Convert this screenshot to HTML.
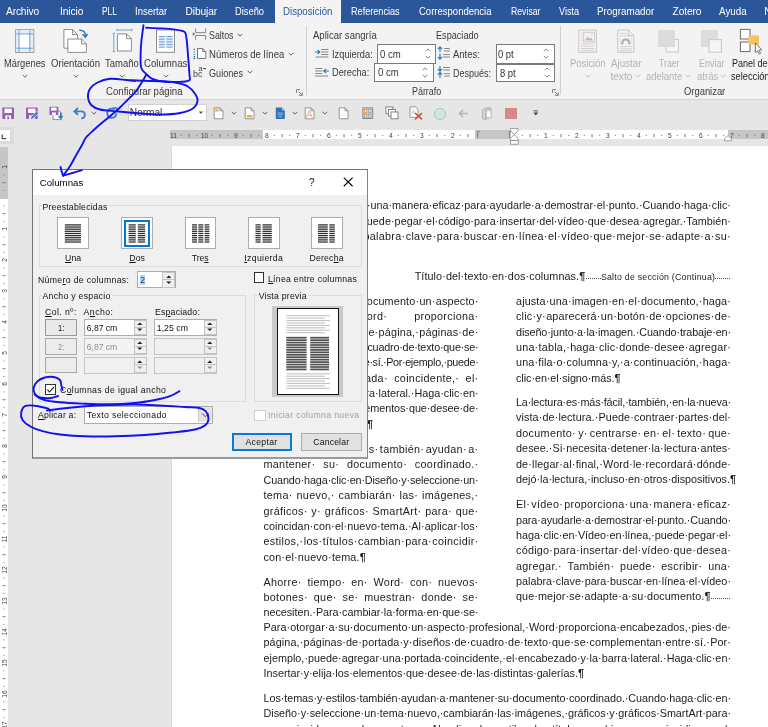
<!DOCTYPE html>
<html lang="es"><head><meta charset="utf-8"><title>Columnas</title>
<style>
html,body{margin:0;padding:0;background:#e6e6e6}
body{width:768px;height:727px;overflow:hidden;position:relative;font-family:"Liberation Sans",sans-serif}
#app{position:absolute;left:0;top:0;width:768px;height:727px;overflow:hidden;background:#e6e6e6}
.sec{position:absolute;left:0;top:0;width:768px;height:727px;will-change:transform}
.b{position:absolute;box-sizing:content-box}
svg.b{overflow:visible}
.t{position:absolute;white-space:nowrap;transform-origin:0 50%}
.t u{text-decoration:underline;text-underline-offset:1px;text-decoration-thickness:0.8px}
.ln{position:absolute;white-space:nowrap;font-size:10.8px;line-height:14px;color:#1c1c1c;word-spacing:-0.278em;letter-spacing:0.3px}
.ln.j{text-align:justify;text-align-last:justify}
</style></head>
<body><div id="app">
<div class="sec" id="page">
<div class="b" style="left:171.00px;top:146.00px;width:597.00px;height:581.00px;background:#fff;border-left:1px solid #d9d9d9"></div>
<div class="ln j" style="left:263.50px;top:199.00px;line-height:12px;width:101.70px;letter-spacing:0.053px;">El· vídeo· proporciona</div>
<div class="ln j" style="left:366.80px;top:199.00px;line-height:12px;width:364.20px;letter-spacing:0.010px;">· una· manera· eficaz· para· ayudarle· a· demostrar· el· punto.· Cuando· haga· clic·</div>
<div class="ln j" style="left:263.50px;top:215.00px;line-height:12px;width:95.64px;letter-spacing:0.105px;">en· Vídeo· en· línea,·</div>
<div class="ln j" style="left:360.74px;top:215.00px;line-height:12px;width:370.26px;letter-spacing:0.034px;">puede· pegar· el· código· para· insertar· del· vídeo· que· desea· agregar.· También·</div>
<div class="ln j" style="left:263.50px;top:230.00px;line-height:12px;width:98.29px;letter-spacing:0.208px;">puede· escribir· una·</div>
<div class="ln j" style="left:363.39px;top:230.00px;line-height:12px;width:367.61px;">palabra· clave· para· buscar· en· línea· el· vídeo· que· mejor· se· adapte· a· su·</div>
<div class="ln n" style="left:263.50px;top:245.00px;line-height:12px;letter-spacing:-0.312px;">documento.<b>¶</b></div>
<div class="ln n" style="left:414.70px;top:270.00px;line-height:12px;letter-spacing:0.081px;">Título· del· texto· en· dos· columnas.<b>¶</b></div>
<div class="b" style="left:585.6px;top:277.6px;width:15px;border-top:1px dotted #555"></div>
<span class="t" style="left:600.90px;top:272.00px;font-size:8.8px;line-height:10px;color:#222;letter-spacing:0.230px;">Salto de sección (Continua)</span>
<div class="b" style="left:715.4px;top:277.6px;width:15px;border-top:1px dotted #555"></div>
<div class="ln j" style="left:263.50px;top:295.00px;line-height:12px;width:95.49px;">Para· otorgar· a· su·</div>
<div class="ln j" style="left:360.59px;top:295.00px;line-height:12px;width:117.91px;letter-spacing:0.155px;">documento· un· aspecto·</div>
<div class="ln j" style="left:263.50px;top:310.00px;line-height:12px;width:91.31px;">profesional,·</div>
<div class="ln j" style="left:356.41px;top:310.00px;line-height:12px;width:122.09px;">Word· proporciona·</div>
<div class="ln j" style="left:263.50px;top:326.00px;line-height:12px;width:97.14px;letter-spacing:0.137px;">encabezados,· pies·</div>
<div class="ln j" style="left:362.24px;top:326.00px;line-height:12px;width:116.26px;letter-spacing:0.173px;">de· página,· páginas· de·</div>
<div class="ln j" style="left:263.50px;top:341.00px;line-height:12px;width:102.30px;letter-spacing:-0.151px;">portada· y· diseños· de·</div>
<div class="ln j" style="left:367.40px;top:341.00px;line-height:12px;width:111.10px;letter-spacing:-0.186px;">cuadro· de· texto· que· se·</div>
<div class="ln j" style="left:263.50px;top:356.00px;line-height:12px;width:81.29px;">complementan·</div>
<div class="ln j" style="left:346.39px;top:356.00px;line-height:12px;width:132.11px;letter-spacing:-0.297px;">entre· sí.· Por· ejemplo,· puede·</div>
<div class="ln j" style="left:263.50px;top:372.00px;line-height:12px;width:80.09px;">agregar· una·</div>
<div class="ln j" style="left:345.19px;top:372.00px;line-height:12px;width:133.31px;">portada· coincidente,· el·</div>
<div class="ln j" style="left:263.50px;top:387.00px;line-height:12px;width:84.79px;letter-spacing:0.059px;">encabezado· y· la·</div>
<div class="ln j" style="left:349.89px;top:387.00px;line-height:12px;width:128.61px;letter-spacing:-0.021px;">barra· lateral.· Haga· clic· en·</div>
<div class="ln j" style="left:263.50px;top:402.00px;line-height:12px;width:90.99px;letter-spacing:0.054px;">Insertar· y· elija· los·</div>
<div class="ln j" style="left:356.09px;top:402.00px;line-height:12px;width:122.41px;letter-spacing:-0.059px;">elementos· que· desee· de·</div>
<div class="ln n" style="left:263.50px;top:418.00px;line-height:12px;letter-spacing:0.039px;">las· distintas· galerías.</div>
<div class="ln n" style="left:366.90px;top:418.00px;line-height:12px;letter-spacing:-1.413px;"><b>¶</b></div>
<div class="ln j" style="left:263.50px;top:443.00px;line-height:12px;width:76.69px;">Los· temas· y·</div>
<div class="ln j" style="left:341.79px;top:443.00px;line-height:12px;width:136.71px;">estilos· también· ayudan· a·</div>
<div class="ln j" style="left:263.50px;top:458.00px;line-height:12px;width:215.00px;">mantener· su· documento· coordinado.·</div>
<div class="ln j" style="left:263.50px;top:474.00px;line-height:12px;width:215.00px;letter-spacing:-0.111px;">Cuando· haga· clic· en· Diseño· y· seleccione· un·</div>
<div class="ln j" style="left:263.50px;top:489.00px;line-height:12px;width:215.00px;">tema· nuevo,· cambiarán· las· imágenes,·</div>
<div class="ln j" style="left:263.50px;top:505.00px;line-height:12px;width:215.00px;">gráficos· y· gráficos· SmartArt· para· que·</div>
<div class="ln j" style="left:263.50px;top:520.00px;line-height:12px;width:215.00px;letter-spacing:0.068px;">coincidan· con· el· nuevo· tema.· Al· aplicar· los·</div>
<div class="ln j" style="left:263.50px;top:535.00px;line-height:12px;width:215.00px;">estilos,· los· títulos· cambian· para· coincidir·</div>
<div class="ln n" style="left:263.50px;top:551.00px;line-height:12px;letter-spacing:0.149px;">con· el· nuevo· tema.<b>¶</b></div>
<div class="ln j" style="left:263.50px;top:576.00px;line-height:12px;width:215.00px;">Ahorre· tiempo· en· Word· con· nuevos·</div>
<div class="ln j" style="left:263.50px;top:591.00px;line-height:12px;width:215.00px;">botones· que· se· muestran· donde· se·</div>
<div class="ln j" style="left:263.50px;top:606.00px;line-height:12px;width:215.00px;letter-spacing:-0.038px;">necesiten.· Para· cambiar· la· forma· en· que· se·</div>
<div class="ln j" style="left:516.00px;top:295.00px;line-height:12px;width:215.00px;letter-spacing:0.140px;">ajusta· una· imagen· en· el· documento,· haga·</div>
<div class="ln j" style="left:516.00px;top:310.00px;line-height:12px;width:215.00px;letter-spacing:0.210px;">clic· y· aparecerá· un· botón· de· opciones· de·</div>
<div class="ln j" style="left:516.00px;top:326.00px;line-height:12px;width:215.00px;letter-spacing:-0.097px;">diseño· junto· a· la· imagen.· Cuando· trabaje· en·</div>
<div class="ln j" style="left:516.00px;top:341.00px;line-height:12px;width:215.00px;letter-spacing:0.188px;">una· tabla,· haga· clic· donde· desee· agregar·</div>
<div class="ln j" style="left:516.00px;top:356.00px;line-height:12px;width:215.00px;letter-spacing:0.121px;">una· fila· o· columna· y,· a· continuación,· haga·</div>
<div class="ln n" style="left:516.00px;top:372.00px;line-height:12px;letter-spacing:-0.043px;">clic· en· el· signo· más.<b>¶</b></div>
<div class="ln j" style="left:516.00px;top:396.00px;line-height:12px;width:215.00px;letter-spacing:-0.135px;">La· lectura· es· más· fácil,· también,· en· la· nueva·</div>
<div class="ln j" style="left:516.00px;top:411.00px;line-height:12px;width:215.00px;letter-spacing:0.094px;">vista· de· lectura.· Puede· contraer· partes· del·</div>
<div class="ln j" style="left:516.00px;top:427.00px;line-height:12px;width:215.00px;">documento· y· centrarse· en· el· texto· que·</div>
<div class="ln j" style="left:516.00px;top:442.00px;line-height:12px;width:215.00px;letter-spacing:0.069px;">desee.· Si· necesita· detener· la· lectura· antes·</div>
<div class="ln j" style="left:516.00px;top:458.00px;line-height:12px;width:215.00px;letter-spacing:0.119px;">de· llegar· al· final,· Word· le· recordará· dónde·</div>
<div class="ln n" style="left:516.00px;top:473.00px;line-height:12px;letter-spacing:-0.004px;">dejó· la· lectura,· incluso· en· otros· dispositivos.<b>¶</b></div>
<div class="ln j" style="left:516.00px;top:498.00px;line-height:12px;width:215.00px;">El· vídeo· proporciona· una· manera· eficaz·</div>
<div class="ln j" style="left:516.00px;top:514.00px;line-height:12px;width:215.00px;letter-spacing:-0.088px;">para· ayudarle· a· demostrar· el· punto.· Cuando·</div>
<div class="ln j" style="left:516.00px;top:529.00px;line-height:12px;width:215.00px;letter-spacing:-0.038px;">haga· clic· en· Vídeo· en· línea,· puede· pegar· el·</div>
<div class="ln j" style="left:516.00px;top:544.00px;line-height:12px;width:215.00px;letter-spacing:0.252px;">código· para· insertar· del· vídeo· que· desea·</div>
<div class="ln j" style="left:516.00px;top:560.00px;line-height:12px;width:215.00px;">agregar.· También· puede· escribir· una·</div>
<div class="ln j" style="left:516.00px;top:575.00px;line-height:12px;width:215.00px;letter-spacing:0.009px;">palabra· clave· para· buscar· en· línea· el· vídeo·</div>
<div class="ln n" style="left:516.00px;top:590.00px;line-height:12px;letter-spacing:0.087px;">que· mejor· se· adapte· a· su· documento.<b>¶</b></div>
<div class="b" style="left:711px;top:597.9px;width:19px;border-top:1px dotted #555"></div>
<div class="ln j" style="left:263.50px;top:621.00px;line-height:12px;width:467.50px;letter-spacing:0.052px;">Para· otorgar· a· su· documento· un· aspecto· profesional,· Word· proporciona· encabezados,· pies· de·</div>
<div class="ln j" style="left:263.50px;top:636.00px;line-height:12px;width:467.50px;letter-spacing:0.112px;">página,· páginas· de· portada· y· diseños· de· cuadro· de· texto· que· se· complementan· entre· sí.· Por·</div>
<div class="ln j" style="left:263.50px;top:652.00px;line-height:12px;width:467.50px;letter-spacing:0.009px;">ejemplo,· puede· agregar· una· portada· coincidente,· el· encabezado· y· la· barra· lateral.· Haga· clic· en·</div>
<div class="ln n" style="left:263.50px;top:667.00px;line-height:12px;letter-spacing:-0.007px;">Insertar· y· elija· los· elementos· que· desee· de· las· distintas· galerías.<b>¶</b></div>
<div class="ln j" style="left:263.50px;top:692.00px;line-height:12px;width:467.50px;letter-spacing:-0.054px;">Los· temas· y· estilos· también· ayudan· a· mantener· su· documento· coordinado.· Cuando· haga· clic· en·</div>
<div class="ln j" style="left:263.50px;top:707.00px;line-height:12px;width:467.50px;letter-spacing:-0.008px;">Diseño· y· seleccione· un· tema· nuevo,· cambiarán· las· imágenes,· gráficos· y· gráficos· SmartArt· para·</div>
<div class="ln j" style="left:263.50px;top:723.00px;line-height:12px;width:467.50px;letter-spacing:0.014px;">que· coincidan· con· el· nuevo· tema.· Al· aplicar· los· estilos,· los· títulos· cambian· para· coincidir· con· el·</div>
</div>
<div class="sec" id="tabs">
<div class="b" style="left:0.00px;top:0.00px;width:768.00px;height:23.00px;background:#2b579a"></div>
<div class="b" style="left:274.50px;top:0.00px;width:66.50px;height:23.00px;background:#f3f3f3"></div>
<span class="t" style="left:6.00px;top:6.00px;font-size:10.2px;line-height:11px;color:#fff;letter-spacing:-0.141px;">Archivo</span>
<span class="t" style="left:60.00px;top:6.00px;font-size:10.2px;line-height:11px;color:#fff;letter-spacing:-0.083px;">Inicio</span>
<span class="t" style="left:102.00px;top:6.00px;font-size:10.2px;line-height:11px;color:#fff;transform:scaleX(0.8269);">PLL</span>
<span class="t" style="left:135.30px;top:6.00px;font-size:10.2px;line-height:11px;color:#fff;transform:scaleX(0.9321);">Insertar</span>
<span class="t" style="left:185.50px;top:6.00px;font-size:10.2px;line-height:11px;color:#fff;letter-spacing:-0.112px;">Dibujar</span>
<span class="t" style="left:235.00px;top:6.00px;font-size:10.2px;line-height:11px;color:#fff;transform:scaleX(0.9143);">Diseño</span>
<span class="t" style="left:351.00px;top:6.00px;font-size:10.2px;line-height:11px;color:#fff;transform:scaleX(0.8938);">Referencias</span>
<span class="t" style="left:418.80px;top:6.00px;font-size:10.2px;line-height:11px;color:#fff;transform:scaleX(0.9344);">Correspondencia</span>
<span class="t" style="left:510.50px;top:6.00px;font-size:10.2px;line-height:11px;color:#fff;transform:scaleX(0.8539);">Revisar</span>
<span class="t" style="left:558.60px;top:6.00px;font-size:10.2px;line-height:11px;color:#fff;transform:scaleX(0.8946);">Vista</span>
<span class="t" style="left:597.30px;top:6.00px;font-size:10.2px;line-height:11px;color:#fff;transform:scaleX(0.9635);">Programador</span>
<span class="t" style="left:672.60px;top:6.00px;font-size:10.2px;line-height:11px;color:#fff;letter-spacing:-0.126px;">Zotero</span>
<span class="t" style="left:719.30px;top:6.00px;font-size:10.2px;line-height:11px;color:#fff;transform:scaleX(0.9651);">Ayuda</span>
<span class="t" style="left:282.50px;top:6.00px;font-size:10.2px;line-height:11px;color:#2b579a;transform:scaleX(0.9502);">Disposición</span>
<span class="t" style="left:764.30px;top:6.00px;font-size:10.2px;line-height:11px;color:#fff;">N</span>
</div>
<div class="sec" id="ribbon">
<div class="b" style="left:0.00px;top:23.00px;width:768.00px;height:75.60px;background:#f3f3f3;border-bottom:1px solid #d4d4d4"></div>
<svg class="b" style="left:14.00px;top:28.00px" width="22" height="26" viewBox="0 0 22 26"><rect x="1.75" y="1.75" width="18" height="22.6" fill="#fff" stroke="#8c8c8c" stroke-width="1"/>
<rect x="2.3" y="2.3" width="16.9" height="3.3" fill="#e6eff8"/><rect x="2.3" y="20.4" width="16.9" height="3.4" fill="#e6eff8"/>
<rect x="2.3" y="2.3" width="2.5" height="21.5" fill="#e6eff8"/><rect x="16" y="2.3" width="3.2" height="21.5" fill="#e6eff8"/>
<path d="M5 2.3V23.8M15.8 2.3V23.8M2.3 5.9H19.2M2.3 20.2H19.2" stroke="#5b9bd5" stroke-width="0.9" fill="none"/></svg>
<span class="t" style="left:3.75px;top:58.00px;font-size:10.2px;line-height:11px;color:#3a3a3a;transform:scaleX(0.9159);">Márgenes</span>
<svg class="b" style="left:20.50px;top:73.00px" width="8" height="6" viewBox="0 0 8 6"><path d="M1.70 1.80 L4 4.20 L6.30 1.80" fill="none" stroke="#666" stroke-width="1"/></svg>
<svg class="b" style="left:62.00px;top:27.00px" width="27" height="27" viewBox="0 0 27 27"><path d="M1.9 2.5H10.5L15.5 7.5V21.2H1.9Z" fill="#fff" stroke="#8c8c8c"/>
<path d="M10.5 2.5V7.5H15.5" fill="none" stroke="#8c8c8c"/>
<path d="M5.8 12H19.5L24.4 16.8V25.4H5.8Z" fill="#fff" stroke="#8c8c8c"/>
<path d="M19.5 12V16.8H24.4" fill="none" stroke="#8c8c8c"/>
<path d="M17.3 3.2C21.5 3 23.6 5 23.4 9.3" fill="none" stroke="#2e75b6" stroke-width="1.5"/>
<path d="M20.6 7.2L23.4 10L25.6 6.9" fill="none" stroke="#2e75b6" stroke-width="1.5"/></svg>
<span class="t" style="left:51.00px;top:58.00px;font-size:10.2px;line-height:11px;color:#3a3a3a;transform:scaleX(0.9403);">Orientación</span>
<svg class="b" style="left:71.50px;top:73.00px" width="8" height="6" viewBox="0 0 8 6"><path d="M1.70 1.80 L4 4.20 L6.30 1.80" fill="none" stroke="#666" stroke-width="1"/></svg>
<svg class="b" style="left:111.00px;top:27.00px" width="24" height="27" viewBox="0 0 24 27"><path d="M6.4 6.9H15.6L20.4 11.7V24H6.4Z" fill="#fff" stroke="#8c8c8c"/>
<path d="M15.6 6.9V11.7H20.4" fill="none" stroke="#8c8c8c"/>
<path d="M6 3H20.8M6 1.8V4.2M20.8 1.8V4.2M2.8 6.4V24.5M1.6 6.4H4M1.6 24.5H4" stroke="#5b9bd5" stroke-width="0.9" fill="none"/></svg>
<span class="t" style="left:105.30px;top:58.00px;font-size:10.2px;line-height:11px;color:#3a3a3a;transform:scaleX(0.9297);">Tamaño</span>
<svg class="b" style="left:118.00px;top:73.00px" width="8" height="6" viewBox="0 0 8 6"><path d="M1.70 1.80 L4 4.20 L6.30 1.80" fill="none" stroke="#666" stroke-width="1"/></svg>
<svg class="b" style="left:155.00px;top:28.00px" width="21" height="26" viewBox="0 0 21 26"><rect x="1.5" y="1.9" width="18" height="22.4" fill="#fff" stroke="#8c8c8c"/>
<rect x="3.8" y="8.5" width="6" height="10.7" fill="#dfeaf6"/><rect x="11.3" y="8.5" width="6.4" height="10.7" fill="#dfeaf6"/><path d="M3.8 8.5H9.8M3.8 11.2H9.8M3.8 13.9H9.8M3.8 16.6H9.8M3.8 19.2H9.8M11.3 8.5H17.7M11.3 11.2H17.7M11.3 13.9H17.7M11.3 16.6H17.7M11.3 19.2H17.7" stroke="#4f8fcc" stroke-width="0.8"/></svg>
<span class="t" style="left:144.20px;top:58.00px;font-size:10.2px;line-height:11px;color:#3a3a3a;transform:scaleX(0.9439);">Columnas</span>
<svg class="b" style="left:161.75px;top:73.00px" width="8" height="6" viewBox="0 0 8 6"><path d="M1.70 1.80 L4 4.20 L6.30 1.80" fill="none" stroke="#666" stroke-width="1"/></svg>
<span class="t" style="left:106.00px;top:86.00px;font-size:10.2px;line-height:11px;color:#3a3a3a;transform:scaleX(0.9444);">Configurar página</span>
<svg class="b" style="left:192.00px;top:28.00px" width="16" height="13" viewBox="0 0 16 13"><path d="M3.6 0.4V4.7H13.6V0.4M3.6 11.8V7.5H13.6V11.8" fill="none" stroke="#858585"/>
<path d="M0.8 4.2L3 6.1L0.8 8Z" fill="#2e75b6"/></svg>
<span class="t" style="left:209.25px;top:30.00px;font-size:10.2px;line-height:11px;color:#3a3a3a;transform:scaleX(0.8649);">Saltos</span>
<svg class="b" style="left:236.00px;top:32.00px" width="8" height="6" viewBox="0 0 8 6"><path d="M1.70 1.80 L4 4.20 L6.30 1.80" fill="none" stroke="#666" stroke-width="1"/></svg>
<svg class="b" style="left:192.00px;top:47.00px" width="16" height="13" viewBox="0 0 16 13"><path d="M5.5 1.5H10.7L13.8 4.6V11.5H5.5Z" fill="#fff" stroke="#777"/><path d="M10.7 1.5V4.6H13.8" fill="none" stroke="#777"/>
<path d="M1.5 2.4H3M1.5 4.8H3M1.5 7.2H3M1.5 9.6H3M1.5 11.6H3" stroke="#2e75b6" stroke-width="1.1"/></svg>
<span class="t" style="left:209.25px;top:49.00px;font-size:10.2px;line-height:11px;color:#3a3a3a;transform:scaleX(0.9357);">Números de línea</span>
<svg class="b" style="left:286.75px;top:50.50px" width="8" height="6" viewBox="0 0 8 6"><path d="M1.70 1.80 L4 4.20 L6.30 1.80" fill="none" stroke="#666" stroke-width="1"/></svg>
<span class="t" style="left:193.00px;top:68.00px;font-size:9.6px;line-height:11px;color:#444;transform:scaleX(0.9467);">bc</span>
<span class="t" style="left:198.60px;top:64.00px;font-size:7.4px;line-height:9px;color:#444;">a</span>
<div class="b" style="left:203.00px;top:67.60px;width:2.60px;height:1.00px;background:#444"></div>
<span class="t" style="left:209.25px;top:68.00px;font-size:10.2px;line-height:11px;color:#3a3a3a;transform:scaleX(0.8958);">Guiones</span>
<svg class="b" style="left:246.00px;top:69.00px" width="8" height="6" viewBox="0 0 8 6"><path d="M1.70 1.80 L4 4.20 L6.30 1.80" fill="none" stroke="#666" stroke-width="1"/></svg>
<svg class="b" style="left:296.00px;top:88.50px" width="7" height="7" viewBox="0 0 7 7"><path d="M0.5 4V0.5H4M2.6 2.6L6 6M6.4 3.2V6.4H3.2" fill="none" stroke="#777" stroke-width="0.9"/></svg>
<div class="b" style="left:305.60px;top:26.00px;width:1.00px;height:69.00px;background:#d0d0d0"></div>
<span class="t" style="left:313.00px;top:30.00px;font-size:10.2px;line-height:11px;color:#3a3a3a;transform:scaleX(0.9381);">Aplicar sangría</span>
<span class="t" style="left:435.50px;top:30.00px;font-size:10.2px;line-height:11px;color:#3a3a3a;transform:scaleX(0.8954);">Espaciado</span>
<svg class="b" style="left:314.00px;top:48.00px" width="16" height="11" viewBox="0 0 16 11"><path d="M7.2 1.5H14.4M7.2 4H14.4M7.2 6.5H14.4M1.6 9H14.4" stroke="#7a7a7a" stroke-width="0.9"/>
<path d="M0.8 4H5.6M3.6 2L5.8 4L3.6 6" fill="none" stroke="#2e75b6" stroke-width="1.1"/></svg>
<span class="t" style="left:331.75px;top:49.00px;font-size:10.2px;line-height:11px;color:#3a3a3a;transform:scaleX(0.9106);">Izquierda:</span>
<svg class="b" style="left:314.00px;top:66.50px" width="16" height="11" viewBox="0 0 16 11"><path d="M1.2 1.5H8.4M1.2 4H8.4M1.2 6.5H8.4M1.2 9H14" stroke="#7a7a7a" stroke-width="0.9"/>
<path d="M15 4H10M12 2L9.8 4L12 6" fill="none" stroke="#2e75b6" stroke-width="1.1"/></svg>
<span class="t" style="left:331.75px;top:67.00px;font-size:10.2px;line-height:11px;color:#3a3a3a;transform:scaleX(0.9010);">Derecha:</span>
<div class="b" style="left:377.00px;top:44.20px;width:57.00px;height:17.40px;background:#fff;border:1px solid #7a7a7a"></div>
<span class="t" style="left:379.80px;top:49.00px;font-size:10.2px;line-height:11px;color:#333;transform:scaleX(0.9398);">0 cm</span>
<svg class="b" style="left:423.70px;top:46.80px" width="8" height="6" viewBox="0 0 8 6"><path d="M1.80 4.10 L4 1.90 L6.20 4.10" fill="none" stroke="#777" stroke-width="0.9"/></svg>
<svg class="b" style="left:423.70px;top:54.40px" width="8" height="6" viewBox="0 0 8 6"><path d="M1.80 1.90 L4 4.10 L6.20 1.90" fill="none" stroke="#777" stroke-width="0.9"/></svg>
<div class="b" style="left:374.00px;top:63.20px;width:57.50px;height:17.00px;background:#fff;border:1px solid #7a7a7a"></div>
<span class="t" style="left:377.50px;top:67.00px;font-size:10.2px;line-height:11px;color:#333;transform:scaleX(0.9398);">0 cm</span>
<svg class="b" style="left:421.20px;top:65.80px" width="8" height="6" viewBox="0 0 8 6"><path d="M1.80 4.10 L4 1.90 L6.20 4.10" fill="none" stroke="#777" stroke-width="0.9"/></svg>
<svg class="b" style="left:421.20px;top:73.00px" width="8" height="6" viewBox="0 0 8 6"><path d="M1.80 1.90 L4 4.10 L6.20 1.90" fill="none" stroke="#777" stroke-width="0.9"/></svg>
<svg class="b" style="left:437.00px;top:45.50px" width="14" height="14" viewBox="0 0 14 14"><path d="M7 2.5H13M7 5H13M6 8.6H13M6 11H13" stroke="#8a8a8a" stroke-width="1"/>
<path d="M3 1V6M1 3L3 0.9L5 3M3 7.5V13M1 11L3 13.1L5 11" fill="none" stroke="#2e75b6" stroke-width="1.1"/></svg>
<span class="t" style="left:453.25px;top:49.00px;font-size:10.2px;line-height:11px;color:#3a3a3a;transform:scaleX(0.9259);">Antes:</span>
<svg class="b" style="left:437.00px;top:64.50px" width="14" height="14" viewBox="0 0 14 14"><path d="M6 2.5H13M6 5H13M7 8.6H13M7 11H13" stroke="#8a8a8a" stroke-width="1"/>
<path d="M3 1V6M1 4L3 6.1L5 4M3 7.5V13M1 9.6L3 7.4L5 9.6" fill="none" stroke="#2e75b6" stroke-width="1.1"/></svg>
<span class="t" style="left:453.25px;top:68.00px;font-size:10.2px;line-height:11px;color:#3a3a3a;transform:scaleX(0.8828);">Después:</span>
<div class="b" style="left:495.50px;top:44.20px;width:57.00px;height:17.40px;background:#fff;border:1px solid #7a7a7a"></div>
<span class="t" style="left:498.00px;top:49.00px;font-size:10.2px;line-height:11px;color:#333;transform:scaleX(0.9265);">0 pt</span>
<svg class="b" style="left:542.20px;top:46.80px" width="8" height="6" viewBox="0 0 8 6"><path d="M1.80 4.10 L4 1.90 L6.20 4.10" fill="none" stroke="#777" stroke-width="0.9"/></svg>
<svg class="b" style="left:542.20px;top:54.40px" width="8" height="6" viewBox="0 0 8 6"><path d="M1.80 1.90 L4 4.10 L6.20 1.90" fill="none" stroke="#777" stroke-width="0.9"/></svg>
<div class="b" style="left:496.20px;top:63.60px;width:57.20px;height:16.80px;background:#fff;border:1px solid #7a7a7a"></div>
<span class="t" style="left:499.50px;top:68.00px;font-size:10.2px;line-height:11px;color:#333;transform:scaleX(0.9265);">8 pt</span>
<svg class="b" style="left:543.10px;top:66.20px" width="8" height="6" viewBox="0 0 8 6"><path d="M1.80 4.10 L4 1.90 L6.20 4.10" fill="none" stroke="#777" stroke-width="0.9"/></svg>
<svg class="b" style="left:543.10px;top:73.20px" width="8" height="6" viewBox="0 0 8 6"><path d="M1.80 1.90 L4 4.10 L6.20 1.90" fill="none" stroke="#777" stroke-width="0.9"/></svg>
<span class="t" style="left:411.75px;top:86.00px;font-size:10.2px;line-height:11px;color:#3a3a3a;transform:scaleX(0.8752);">Párrafo</span>
<svg class="b" style="left:551.50px;top:88.50px" width="7" height="7" viewBox="0 0 7 7"><path d="M0.5 4V0.5H4M2.6 2.6L6 6M6.4 3.2V6.4H3.2" fill="none" stroke="#777" stroke-width="0.9"/></svg>
<div class="b" style="left:560.00px;top:26.00px;width:1.00px;height:69.00px;background:#d0d0d0"></div>
<svg class="b" style="left:578.00px;top:29.00px" width="20" height="25" viewBox="0 0 20 25"><rect x="0.8" y="1.1" width="17.6" height="22.2" fill="#f7f4f6" stroke="#c9c6c8"/>
<rect x="5.6" y="3.2" width="11" height="9.8" fill="#f3f0f2" stroke="#c9c6c8" stroke-width="0.9"/><path d="M7 11.4L9.6 7.4L11.4 9.8L12.8 8.4L15.2 11.4Z" fill="#bfb8bc"/><rect x="13.2" y="5" width="1.6" height="1.4" fill="#d9d4d7"/>
<path d="M2.8 15H16.4M2.8 17.3H16.4M2.8 19.5H16.4M2.8 21.6H16.4M2.8 4.6H4.2M2.8 7H4.2M2.8 9.4H4.2M2.8 11.8H4.2" stroke="#c9c6c8" stroke-width="0.8"/></svg>
<span class="t" style="left:570.00px;top:58.00px;font-size:10.2px;line-height:11px;color:#b6b1b4;transform:scaleX(0.9282);">Posición</span>
<svg class="b" style="left:583.50px;top:73.00px" width="8" height="6" viewBox="0 0 8 6"><path d="M1.70 1.80 L4 4.20 L6.30 1.80" fill="none" stroke="#c0c0c0" stroke-width="1"/></svg>
<svg class="b" style="left:616.00px;top:29.00px" width="20" height="25" viewBox="0 0 20 25"><path d="M1.7 1.1H12.4L17.8 6.4V23.3H1.7Z" fill="#f7f4f6" stroke="#c9c6c8"/><path d="M12.4 1.1V6.4H17.8" fill="none" stroke="#c9c6c8"/>
<path d="M3.6 4.4H10.6M3.6 6.9H15.8M3.6 17.6H15.8M3.6 19.8H15.8M3.6 21.8H15.8M3.2 9.8H4.8M3.2 12.2H4.6M3.2 14.6H4.6M14.8 9.8H16.2M15 12.2H16.2M15 14.6H16.2" stroke="#c9c6c8" stroke-width="0.8"/>
<path d="M6.2 15.4C6.2 8.6 13.4 8.6 13.4 15.4" fill="none" stroke="#b7b0b4" stroke-width="2.3"/></svg>
<span class="t" style="left:611.00px;top:58.00px;font-size:10.2px;line-height:11px;color:#b6b1b4;transform:scaleX(0.9616);">Ajustar</span>
<span class="t" style="left:610.50px;top:71.00px;font-size:10.2px;line-height:11px;color:#b6b1b4;letter-spacing:-0.069px;">texto</span>
<svg class="b" style="left:633.75px;top:73.00px" width="8" height="6" viewBox="0 0 8 6"><path d="M1.70 1.80 L4 4.20 L6.30 1.80" fill="none" stroke="#c0c0c0" stroke-width="1"/></svg>
<svg class="b" style="left:657.00px;top:28.50px" width="24" height="25" viewBox="0 0 24 25"><rect x="9" y="10.4" width="12.4" height="12.6" fill="#f6f4f5" stroke="#c9c6c8"/><rect x="1" y="1" width="17" height="17" fill="#dedbdd"/></svg>
<span class="t" style="left:658.50px;top:58.00px;font-size:10.2px;line-height:11px;color:#b6b1b4;transform:scaleX(0.8553);">Traer</span>
<span class="t" style="left:646.00px;top:71.00px;font-size:10.2px;line-height:11px;color:#b6b1b4;transform:scaleX(0.9273);">adelante</span>
<svg class="b" style="left:684.00px;top:73.00px" width="8" height="6" viewBox="0 0 8 6"><path d="M1.70 1.80 L4 4.20 L6.30 1.80" fill="none" stroke="#c0c0c0" stroke-width="1"/></svg>
<svg class="b" style="left:699.50px;top:28.50px" width="24" height="25" viewBox="0 0 24 25"><rect x="1" y="1" width="17" height="17" fill="#dedbdd"/><rect x="9" y="10.6" width="12.4" height="12.6" fill="#f6f4f5" stroke="#c9c6c8"/></svg>
<span class="t" style="left:698.50px;top:58.00px;font-size:10.2px;line-height:11px;color:#b6b1b4;transform:scaleX(0.8826);">Enviar</span>
<span class="t" style="left:696.75px;top:71.00px;font-size:10.2px;line-height:11px;color:#b6b1b4;transform:scaleX(0.9379);">atrás</span>
<svg class="b" style="left:719.00px;top:73.00px" width="8" height="6" viewBox="0 0 8 6"><path d="M1.70 1.80 L4 4.20 L6.30 1.80" fill="none" stroke="#c0c0c0" stroke-width="1"/></svg>
<svg class="b" style="left:739.00px;top:28.00px" width="25" height="26" viewBox="0 0 25 26"><rect x="1.4" y="1.4" width="9.6" height="9.6" fill="#fff" stroke="#6a6a6a"/><rect x="1.4" y="14" width="9.6" height="9.6" fill="#fff" stroke="#6a6a6a"/>
<rect x="9.4" y="7.4" width="10.6" height="9.2" fill="#f5c264"/>
<path d="M16.4 14.8V24.6L18.6 22.6L20.2 26L21.6 25.3L20 22L22.8 21.8Z" fill="#fff" stroke="#555" stroke-width="0.8"/></svg>
<span class="t" style="left:732.25px;top:58.00px;font-size:10.2px;line-height:11px;color:#222;transform:scaleX(0.8827);">Panel de</span>
<span class="t" style="left:731.00px;top:71.00px;font-size:10.2px;line-height:11px;color:#222;transform:scaleX(0.9062);">selección</span>
<span class="t" style="left:684.00px;top:86.00px;font-size:10.2px;line-height:11px;color:#3a3a3a;transform:scaleX(0.9221);">Organizar</span>
</div>
<div class="sec" id="qat">
<svg class="b" style="left:2.00px;top:107.00px" width="13" height="13" viewBox="0 0 13 13"><rect x="0.3" y="0.4" width="11.7" height="11.6" rx="0.8" fill="#9a5cb4"/><rect x="2.4" y="1.6" width="7.4" height="4.4" fill="#fff"/><rect x="3.4" y="8.4" width="5.6" height="3.6" fill="#fff"/><rect x="5.2" y="9.6" width="2" height="2.4" fill="#9a5cb4"/></svg>
<svg class="b" style="left:26.00px;top:107.00px" width="13" height="13" viewBox="0 0 13 13"><rect x="0" y="0.4" width="11.7" height="11.6" rx="0.8" fill="#9a5cb4"/><rect x="2.1" y="1.6" width="7.4" height="4.4" fill="#fff"/><rect x="3.1" y="8.4" width="5.6" height="3.6" fill="#fff"/>
<path d="M4.2 12.6L5 9.8L10.6 4.2L12.6 6.2L7 11.8Z" fill="#3d86c6" stroke="#e6e6e6" stroke-width="0.7"/></svg>
<svg class="b" style="left:48.50px;top:106.00px" width="15" height="15" viewBox="0 0 15 15"><path d="M4 5H10.6L12.6 7.2V13.6H4Z" fill="#f8f8f8" stroke="#777" stroke-width="0.8"/>
<rect x="0.5" y="0.7" width="8.8" height="8.4" rx="0.6" fill="#9a5cb4"/><rect x="2" y="1.6" width="5.6" height="3" fill="#fff"/><rect x="3" y="6.4" width="3.8" height="2.7" fill="#fff"/>
<path d="M11.6 6.6V12M9.6 10L11.6 12.2L13.6 10" fill="none" stroke="#2e75b6" stroke-width="1.3"/></svg>
<svg class="b" style="left:73.00px;top:106.50px" width="14" height="13" viewBox="0 0 14 13"><path d="M1.6 4.4H8.2C13 4.4 13 11.2 8.2 11.4" fill="none" stroke="#3d7fc1" stroke-width="1.9"/><path d="M5 1L1.4 4.4L5 7.8" fill="none" stroke="#3d7fc1" stroke-width="1.9"/></svg>
<svg class="b" style="left:89.50px;top:110.20px" width="8" height="6" viewBox="0 0 8 6"><path d="M1.70 1.80 L4 4.20 L6.30 1.80" fill="none" stroke="#666" stroke-width="1"/></svg>
<svg class="b" style="left:105.50px;top:106.50px" width="12" height="13" viewBox="0 0 12 13"><path d="M8.6 2.6A4.6 4.6 0 1 0 10.4 6.4" fill="none" stroke="#3d7fc1" stroke-width="1.9"/><path d="M6.4 1H10.6V5" fill="none" stroke="#3d7fc1" stroke-width="1.4"/></svg>
<div class="b" style="left:127.50px;top:103.60px;width:77.20px;height:15.40px;background:#fff;border:1px solid #d2d2d2"></div>
<span class="t" style="left:129.75px;top:107.00px;font-size:10.2px;line-height:11px;color:#333;letter-spacing:-0.057px;">Normal</span>
<svg class="b" style="left:198.00px;top:110.60px" width="7" height="5" viewBox="0 0 7 5"><path d="M0.8 0.6H5L2.9 3Z" fill="#555"/></svg>
<svg class="b" style="left:213.40px;top:106.50px" width="12" height="13" viewBox="0 0 12 13"><path d="M1.2 0.8H7L10 3.8V11.8H1.2Z" fill="#fff" stroke="#8a8a8a" stroke-width="0.9"/><path d="M7 0.8V3.8H10" fill="none" stroke="#8a8a8a" stroke-width="0.9"/><rect x="2.2" y="1.8" width="3.4" height="2.8" fill="#f2b35c"/></svg>
<svg class="b" style="left:230.20px;top:110.20px" width="8" height="6" viewBox="0 0 8 6"><path d="M1.70 1.80 L4 4.20 L6.30 1.80" fill="none" stroke="#666" stroke-width="1"/></svg>
<svg class="b" style="left:244.40px;top:106.50px" width="12" height="13" viewBox="0 0 12 13"><path d="M1.2 0.8H7L10 3.8V11.8H1.2Z" fill="#fff" stroke="#8a8a8a" stroke-width="0.9"/><path d="M7 0.8V3.8H10" fill="none" stroke="#8a8a8a" stroke-width="0.9"/><rect x="2.8" y="8.2" width="5.6" height="2.2" fill="#f2a23a"/></svg>
<svg class="b" style="left:260.50px;top:110.20px" width="8" height="6" viewBox="0 0 8 6"><path d="M1.70 1.80 L4 4.20 L6.30 1.80" fill="none" stroke="#666" stroke-width="1"/></svg>
<svg class="b" style="left:275.40px;top:106.50px" width="12" height="13" viewBox="0 0 12 13"><path d="M0.8 0.6H6.8L9.8 3.6V12H0.8Z" fill="#2f71b3"/><path d="M6.8 0.6V3.6H9.8Z" fill="#9cc0e4"/><path d="M2.6 6H8M2.6 7.8H8M3.6 9.8H7" stroke="#a9c8e8" stroke-width="0.8"/></svg>
<svg class="b" style="left:291.00px;top:110.20px" width="8" height="6" viewBox="0 0 8 6"><path d="M1.70 1.80 L4 4.20 L6.30 1.80" fill="none" stroke="#666" stroke-width="1"/></svg>
<svg class="b" style="left:304.40px;top:106.50px" width="12" height="13" viewBox="0 0 12 13"><path d="M1.2 0.8H7L10 3.8V11.8H1.2Z" fill="#fff" stroke="#8a8a8a" stroke-width="0.9"/><path d="M7 0.8V3.8H10" fill="none" stroke="#8a8a8a" stroke-width="0.9"/><path d="M2.4 10.6L5.2 3.8L8.2 10.6M3.4 8.4H7.2" fill="none" stroke="#f1aea4" stroke-width="1.2"/></svg>
<svg class="b" style="left:321.00px;top:110.20px" width="8" height="6" viewBox="0 0 8 6"><path d="M1.70 1.80 L4 4.20 L6.30 1.80" fill="none" stroke="#666" stroke-width="1"/></svg>
<svg class="b" style="left:337.90px;top:106.50px" width="12" height="13" viewBox="0 0 12 13"><path d="M1.2 0.8H7L10 3.8V11.8H1.2Z" fill="#fff" stroke="#8a8a8a" stroke-width="0.9"/><path d="M7 0.8V3.8H10" fill="none" stroke="#8a8a8a" stroke-width="0.9"/></svg>
<svg class="b" style="left:362.00px;top:106.50px" width="12" height="13" viewBox="0 0 12 13"><rect x="0.9" y="0.9" width="9.8" height="10.6" fill="#dedede" stroke="#858585" stroke-width="1"/><rect x="2.7" y="2.6" width="2.2" height="3.2" fill="#fff" stroke="#f0922a" stroke-width="1"/><rect x="6.7" y="2.6" width="2.2" height="3.2" fill="#fff" stroke="#8a8a8a" stroke-width="0.8"/><rect x="2.7" y="7.2" width="2.2" height="3" fill="#fff" stroke="#8a8a8a" stroke-width="0.8"/><rect x="6.7" y="7.2" width="2.2" height="3" fill="#fff" stroke="#8a8a8a" stroke-width="0.8"/></svg>
<svg class="b" style="left:384.50px;top:106.00px" width="15" height="14" viewBox="0 0 15 14"><rect x="0.9" y="0.9" width="7" height="6.6" fill="#fff" stroke="#777" stroke-width="0.9"/><rect x="3.4" y="3.4" width="7" height="6.6" fill="#fff" stroke="#777" stroke-width="0.9"/><rect x="6" y="6" width="7" height="6.8" fill="#fff" stroke="#777" stroke-width="0.9"/></svg>
<svg class="b" style="left:408.50px;top:106.00px" width="15" height="15" viewBox="0 0 15 15"><path d="M1 0.8H6.4L9 3.4V11.4H1Z" fill="#f6f6f6" stroke="#888" stroke-width="0.8"/><path d="M3 8L4.4 4.6L5.8 8" fill="none" stroke="#bbb" stroke-width="0.7"/><path d="M6 7L13 13.4M13 7L6 13.4" stroke="#e0492e" stroke-width="1.6"/></svg>
<svg class="b" style="left:432.50px;top:106.50px" width="14" height="14" viewBox="0 0 14 14"><circle cx="7" cy="7" r="5.6" fill="#d3e6dc" stroke="#a2c6b2" stroke-width="1"/></svg>
<svg class="b" style="left:458.00px;top:108.50px" width="11" height="9" viewBox="0 0 11 9"><path d="M9.8 4.5H1.6M5 1L1.4 4.5L5 8" fill="none" stroke="#b3b3b3" stroke-width="1.6"/></svg>
<svg class="b" style="left:481.00px;top:106.50px" width="12" height="14" viewBox="0 0 12 14"><path d="M1.6 2.6Q4.4 0.4 9.8 1V10.6Q5.4 11 4.6 12.8L1.6 11.6Z" fill="#dcdcdc" stroke="#a2a2a2" stroke-width="0.8"/><path d="M4.4 12.4V3.4Q6 1.6 9.6 1.4" fill="none" stroke="#a2a2a2" stroke-width="0.7"/><rect x="5.4" y="3.8" width="4.6" height="7" fill="#fbf9fb" stroke="#b0b0b0" stroke-width="0.6"/></svg>
<div class="b" style="left:505.00px;top:107.80px;width:11.60px;height:11.20px;background:#db8688"></div>
<svg class="b" style="left:531.50px;top:109.00px" width="8" height="8" viewBox="0 0 8 8"><path d="M1.6 1.9H6" stroke="#444" stroke-width="0.9"/><path d="M1.4 3.6H6.2L3.8 6.4Z" fill="#444"/></svg>
</div>
<div class="sec" id="rulers">
<div class="b" style="left:0.00px;top:126.80px;width:13.80px;height:17.00px;background:#dcdcdc"></div>
<div class="b" style="left:0.00px;top:130.00px;width:10.00px;height:10.50px;background:#fff"></div>
<svg class="b" style="left:1.00px;top:133.50px" width="6" height="6" viewBox="0 0 6 6"><path d="M1.2 0.4V4.6H5.4" fill="none" stroke="#555" stroke-width="1.3"/></svg>
<div class="b" style="left:170.00px;top:130.00px;width:598.00px;height:9.00px;background:#fff"></div>
<div class="b" style="left:170.00px;top:130.00px;width:92.50px;height:9.00px;background:#c6c6c6"></div>
<div class="b" style="left:475.00px;top:130.00px;width:36.00px;height:9.00px;background:#c6c6c6"></div>
<div class="b" style="left:728.00px;top:130.00px;width:40.00px;height:9.00px;background:#c6c6c6"></div>
<span class="t" style="left:170.00px;top:131.00px;font-size:8px;line-height:9px;color:#404040;transform:scaleX(0.8421);">11</span>
<span class="t" style="left:201.00px;top:131.00px;font-size:8px;line-height:9px;color:#404040;transform:scaleX(0.7860);">10</span>
<span class="t" style="left:233.65px;top:131.00px;font-size:8px;line-height:9px;color:#404040;transform:scaleX(0.8309);">9</span>
<span class="t" style="left:264.65px;top:131.00px;font-size:8px;line-height:9px;color:#404040;transform:scaleX(0.8309);">8</span>
<span class="t" style="left:295.65px;top:131.00px;font-size:8px;line-height:9px;color:#404040;transform:scaleX(0.8309);">7</span>
<span class="t" style="left:326.65px;top:131.00px;font-size:8px;line-height:9px;color:#404040;transform:scaleX(0.8309);">6</span>
<span class="t" style="left:357.65px;top:131.00px;font-size:8px;line-height:9px;color:#404040;transform:scaleX(0.8309);">5</span>
<span class="t" style="left:388.65px;top:131.00px;font-size:8px;line-height:9px;color:#404040;transform:scaleX(0.8309);">4</span>
<span class="t" style="left:419.65px;top:131.00px;font-size:8px;line-height:9px;color:#404040;transform:scaleX(0.8309);">3</span>
<span class="t" style="left:450.65px;top:131.00px;font-size:8px;line-height:9px;color:#404040;transform:scaleX(0.8309);">2</span>
<span class="t" style="left:543.65px;top:131.00px;font-size:8px;line-height:9px;color:#404040;transform:scaleX(0.8309);">1</span>
<span class="t" style="left:574.65px;top:131.00px;font-size:8px;line-height:9px;color:#404040;transform:scaleX(0.8309);">2</span>
<span class="t" style="left:605.65px;top:131.00px;font-size:8px;line-height:9px;color:#404040;transform:scaleX(0.8309);">3</span>
<span class="t" style="left:636.65px;top:131.00px;font-size:8px;line-height:9px;color:#404040;transform:scaleX(0.8309);">4</span>
<span class="t" style="left:667.65px;top:131.00px;font-size:8px;line-height:9px;color:#404040;transform:scaleX(0.8309);">5</span>
<span class="t" style="left:698.65px;top:131.00px;font-size:8px;line-height:9px;color:#404040;transform:scaleX(0.8309);">6</span>
<span class="t" style="left:729.65px;top:131.00px;font-size:8px;line-height:9px;color:#404040;transform:scaleX(0.8309);">7</span>
<span class="t" style="left:760.65px;top:131.00px;font-size:8px;line-height:9px;color:#404040;transform:scaleX(0.8309);">8</span>
<svg class="b" style="left:170.00px;top:130.00px" width="598" height="9" viewBox="0 0 598 9"><rect x="10.8" y="4.8" width="1" height="1" fill="#6a6a6a"/><rect x="18.6" y="4" width="0.9" height="3.4" fill="#6a6a6a"/><rect x="26.2" y="4.8" width="1" height="1" fill="#6a6a6a"/><rect x="41.8" y="4.8" width="1" height="1" fill="#6a6a6a"/><rect x="49.6" y="4" width="0.9" height="3.4" fill="#6a6a6a"/><rect x="57.2" y="4.8" width="1" height="1" fill="#6a6a6a"/><rect x="72.8" y="4.8" width="1" height="1" fill="#6a6a6a"/><rect x="80.6" y="4" width="0.9" height="3.4" fill="#6a6a6a"/><rect x="88.2" y="4.8" width="1" height="1" fill="#6a6a6a"/><rect x="103.8" y="4.8" width="1" height="1" fill="#6a6a6a"/><rect x="111.6" y="4" width="0.9" height="3.4" fill="#6a6a6a"/><rect x="119.2" y="4.8" width="1" height="1" fill="#6a6a6a"/><rect x="134.8" y="4.8" width="1" height="1" fill="#6a6a6a"/><rect x="142.6" y="4" width="0.9" height="3.4" fill="#6a6a6a"/><rect x="150.2" y="4.8" width="1" height="1" fill="#6a6a6a"/><rect x="165.8" y="4.8" width="1" height="1" fill="#6a6a6a"/><rect x="173.6" y="4" width="0.9" height="3.4" fill="#6a6a6a"/><rect x="181.2" y="4.8" width="1" height="1" fill="#6a6a6a"/><rect x="196.8" y="4.8" width="1" height="1" fill="#6a6a6a"/><rect x="204.6" y="4" width="0.9" height="3.4" fill="#6a6a6a"/><rect x="212.2" y="4.8" width="1" height="1" fill="#6a6a6a"/><rect x="227.8" y="4.8" width="1" height="1" fill="#6a6a6a"/><rect x="235.6" y="4" width="0.9" height="3.4" fill="#6a6a6a"/><rect x="243.2" y="4.8" width="1" height="1" fill="#6a6a6a"/><rect x="258.8" y="4.8" width="1" height="1" fill="#6a6a6a"/><rect x="266.6" y="4" width="0.9" height="3.4" fill="#6a6a6a"/><rect x="274.2" y="4.8" width="1" height="1" fill="#6a6a6a"/><rect x="289.8" y="4.8" width="1" height="1" fill="#6a6a6a"/><rect x="297.6" y="4" width="0.9" height="3.4" fill="#6a6a6a"/><rect x="351.8" y="4.8" width="1" height="1" fill="#6a6a6a"/><rect x="359.6" y="4" width="0.9" height="3.4" fill="#6a6a6a"/><rect x="367.2" y="4.8" width="1" height="1" fill="#6a6a6a"/><rect x="382.8" y="4.8" width="1" height="1" fill="#6a6a6a"/><rect x="390.6" y="4" width="0.9" height="3.4" fill="#6a6a6a"/><rect x="398.2" y="4.8" width="1" height="1" fill="#6a6a6a"/><rect x="413.8" y="4.8" width="1" height="1" fill="#6a6a6a"/><rect x="421.6" y="4" width="0.9" height="3.4" fill="#6a6a6a"/><rect x="429.2" y="4.8" width="1" height="1" fill="#6a6a6a"/><rect x="444.8" y="4.8" width="1" height="1" fill="#6a6a6a"/><rect x="452.6" y="4" width="0.9" height="3.4" fill="#6a6a6a"/><rect x="460.2" y="4.8" width="1" height="1" fill="#6a6a6a"/><rect x="475.8" y="4.8" width="1" height="1" fill="#6a6a6a"/><rect x="483.6" y="4" width="0.9" height="3.4" fill="#6a6a6a"/><rect x="491.2" y="4.8" width="1" height="1" fill="#6a6a6a"/><rect x="506.8" y="4.8" width="1" height="1" fill="#6a6a6a"/><rect x="514.6" y="4" width="0.9" height="3.4" fill="#6a6a6a"/><rect x="522.2" y="4.8" width="1" height="1" fill="#6a6a6a"/><rect x="537.8" y="4.8" width="1" height="1" fill="#6a6a6a"/><rect x="545.6" y="4" width="0.9" height="3.4" fill="#6a6a6a"/><rect x="553.2" y="4.8" width="1" height="1" fill="#6a6a6a"/><rect x="568.8" y="4.8" width="1" height="1" fill="#6a6a6a"/><rect x="576.6" y="4" width="0.9" height="3.4" fill="#6a6a6a"/><rect x="584.2" y="4.8" width="1" height="1" fill="#6a6a6a"/></svg>
<svg class="b" style="left:473.40px;top:128.00px" width="50" height="18" viewBox="0 0 50 18"><path d="M4.6 9.8V3.6H6.6" fill="none" stroke="#777" stroke-width="0.9"/><path d="M36.4 9.8V3.6H38" fill="none" stroke="#777" stroke-width="0.9"/>
<path d="M37.4 0.6H45.2V2.6L41.3 6.4L37.4 2.6Z" fill="#fff" stroke="#8a8a8a" stroke-width="0.8"/>
<path d="M41.3 6.6L45.2 10.4V12.4H37.4V10.4Z" fill="#fff" stroke="#8a8a8a" stroke-width="0.8"/>
<rect x="37.4" y="12.6" width="7.8" height="3.6" fill="#fff" stroke="#8a8a8a" stroke-width="0.8"/></svg>
<svg class="b" style="left:723.00px;top:134.00px" width="10" height="8" viewBox="0 0 10 8"><path d="M1.5 6.8V4.6L5 1.6L8.5 4.6V6.8Z" fill="#fff" stroke="#8a8a8a" stroke-width="0.8"/></svg>
<div class="b" style="left:0.00px;top:146.80px;width:8.00px;height:581.00px;background:#fff"></div>
<div class="b" style="left:0.00px;top:146.80px;width:8.00px;height:52.00px;background:#c6c6c6"></div>
<span class="t" style="left:-5.3px;top:162.0px;width:20px;height:10px;line-height:10px;text-align:center;font-size:8px;color:#404040;transform-origin:50% 50%;transform:rotate(-90deg) scaleX(0.82)">1</span>
<span class="t" style="left:-5.3px;top:224.0px;width:20px;height:10px;line-height:10px;text-align:center;font-size:8px;color:#404040;transform-origin:50% 50%;transform:rotate(-90deg) scaleX(0.82)">1</span>
<span class="t" style="left:-5.3px;top:255.0px;width:20px;height:10px;line-height:10px;text-align:center;font-size:8px;color:#404040;transform-origin:50% 50%;transform:rotate(-90deg) scaleX(0.82)">2</span>
<span class="t" style="left:-5.3px;top:286.0px;width:20px;height:10px;line-height:10px;text-align:center;font-size:8px;color:#404040;transform-origin:50% 50%;transform:rotate(-90deg) scaleX(0.82)">3</span>
<span class="t" style="left:-5.3px;top:317.0px;width:20px;height:10px;line-height:10px;text-align:center;font-size:8px;color:#404040;transform-origin:50% 50%;transform:rotate(-90deg) scaleX(0.82)">4</span>
<span class="t" style="left:-5.3px;top:348.0px;width:20px;height:10px;line-height:10px;text-align:center;font-size:8px;color:#404040;transform-origin:50% 50%;transform:rotate(-90deg) scaleX(0.82)">5</span>
<span class="t" style="left:-5.3px;top:379.0px;width:20px;height:10px;line-height:10px;text-align:center;font-size:8px;color:#404040;transform-origin:50% 50%;transform:rotate(-90deg) scaleX(0.82)">6</span>
<span class="t" style="left:-5.3px;top:410.0px;width:20px;height:10px;line-height:10px;text-align:center;font-size:8px;color:#404040;transform-origin:50% 50%;transform:rotate(-90deg) scaleX(0.82)">7</span>
<span class="t" style="left:-5.3px;top:441.0px;width:20px;height:10px;line-height:10px;text-align:center;font-size:8px;color:#404040;transform-origin:50% 50%;transform:rotate(-90deg) scaleX(0.82)">8</span>
<span class="t" style="left:-5.3px;top:472.0px;width:20px;height:10px;line-height:10px;text-align:center;font-size:8px;color:#404040;transform-origin:50% 50%;transform:rotate(-90deg) scaleX(0.82)">9</span>
<span class="t" style="left:-5.3px;top:503.0px;width:20px;height:10px;line-height:10px;text-align:center;font-size:8px;color:#404040;transform-origin:50% 50%;transform:rotate(-90deg) scaleX(0.82)">10</span>
<span class="t" style="left:-5.3px;top:534.0px;width:20px;height:10px;line-height:10px;text-align:center;font-size:8px;color:#404040;transform-origin:50% 50%;transform:rotate(-90deg) scaleX(0.82)">11</span>
<span class="t" style="left:-5.3px;top:565.0px;width:20px;height:10px;line-height:10px;text-align:center;font-size:8px;color:#404040;transform-origin:50% 50%;transform:rotate(-90deg) scaleX(0.82)">12</span>
<span class="t" style="left:-5.3px;top:596.0px;width:20px;height:10px;line-height:10px;text-align:center;font-size:8px;color:#404040;transform-origin:50% 50%;transform:rotate(-90deg) scaleX(0.82)">13</span>
<span class="t" style="left:-5.3px;top:627.0px;width:20px;height:10px;line-height:10px;text-align:center;font-size:8px;color:#404040;transform-origin:50% 50%;transform:rotate(-90deg) scaleX(0.82)">14</span>
<span class="t" style="left:-5.3px;top:658.0px;width:20px;height:10px;line-height:10px;text-align:center;font-size:8px;color:#404040;transform-origin:50% 50%;transform:rotate(-90deg) scaleX(0.82)">15</span>
<span class="t" style="left:-5.3px;top:689.0px;width:20px;height:10px;line-height:10px;text-align:center;font-size:8px;color:#404040;transform-origin:50% 50%;transform:rotate(-90deg) scaleX(0.82)">16</span>
<span class="t" style="left:-5.3px;top:720.0px;width:20px;height:10px;line-height:10px;text-align:center;font-size:8px;color:#404040;transform-origin:50% 50%;transform:rotate(-90deg) scaleX(0.82)">17</span>
<svg class="b" style="left:0.00px;top:146.80px" width="8" height="581" viewBox="0 0 8 581"><rect x="3.4" y="27.4" width="1" height="1" fill="#777"/><rect x="2.4" y="35.3" width="3.2" height="0.9" fill="#777"/><rect x="3.4" y="42.9" width="1" height="1" fill="#777"/><rect x="3.4" y="58.4" width="1" height="1" fill="#777"/><rect x="2.4" y="66.3" width="3.2" height="0.9" fill="#777"/><rect x="3.4" y="73.9" width="1" height="1" fill="#777"/><rect x="3.4" y="89.4" width="1" height="1" fill="#777"/><rect x="2.4" y="97.3" width="3.2" height="0.9" fill="#777"/><rect x="3.4" y="104.9" width="1" height="1" fill="#777"/><rect x="3.4" y="120.4" width="1" height="1" fill="#777"/><rect x="2.4" y="128.3" width="3.2" height="0.9" fill="#777"/><rect x="3.4" y="135.9" width="1" height="1" fill="#777"/><rect x="3.4" y="151.4" width="1" height="1" fill="#777"/><rect x="2.4" y="159.3" width="3.2" height="0.9" fill="#777"/><rect x="3.4" y="166.9" width="1" height="1" fill="#777"/><rect x="3.4" y="182.4" width="1" height="1" fill="#777"/><rect x="2.4" y="190.3" width="3.2" height="0.9" fill="#777"/><rect x="3.4" y="197.9" width="1" height="1" fill="#777"/><rect x="3.4" y="213.4" width="1" height="1" fill="#777"/><rect x="2.4" y="221.3" width="3.2" height="0.9" fill="#777"/><rect x="3.4" y="228.9" width="1" height="1" fill="#777"/><rect x="3.4" y="244.4" width="1" height="1" fill="#777"/><rect x="2.4" y="252.3" width="3.2" height="0.9" fill="#777"/><rect x="3.4" y="259.9" width="1" height="1" fill="#777"/><rect x="3.4" y="275.4" width="1" height="1" fill="#777"/><rect x="2.4" y="283.3" width="3.2" height="0.9" fill="#777"/><rect x="3.4" y="290.9" width="1" height="1" fill="#777"/><rect x="3.4" y="306.4" width="1" height="1" fill="#777"/><rect x="2.4" y="314.3" width="3.2" height="0.9" fill="#777"/><rect x="3.4" y="321.9" width="1" height="1" fill="#777"/><rect x="3.4" y="337.4" width="1" height="1" fill="#777"/><rect x="2.4" y="345.3" width="3.2" height="0.9" fill="#777"/><rect x="3.4" y="352.9" width="1" height="1" fill="#777"/><rect x="3.4" y="368.4" width="1" height="1" fill="#777"/><rect x="2.4" y="376.3" width="3.2" height="0.9" fill="#777"/><rect x="3.4" y="383.9" width="1" height="1" fill="#777"/><rect x="3.4" y="399.4" width="1" height="1" fill="#777"/><rect x="2.4" y="407.3" width="3.2" height="0.9" fill="#777"/><rect x="3.4" y="414.9" width="1" height="1" fill="#777"/><rect x="3.4" y="430.4" width="1" height="1" fill="#777"/><rect x="2.4" y="438.3" width="3.2" height="0.9" fill="#777"/><rect x="3.4" y="445.9" width="1" height="1" fill="#777"/><rect x="3.4" y="461.4" width="1" height="1" fill="#777"/><rect x="2.4" y="469.3" width="3.2" height="0.9" fill="#777"/><rect x="3.4" y="476.9" width="1" height="1" fill="#777"/><rect x="3.4" y="492.4" width="1" height="1" fill="#777"/><rect x="2.4" y="500.3" width="3.2" height="0.9" fill="#777"/><rect x="3.4" y="507.9" width="1" height="1" fill="#777"/><rect x="3.4" y="523.5" width="1" height="1" fill="#777"/><rect x="2.4" y="531.3" width="3.2" height="0.9" fill="#777"/><rect x="3.4" y="539.0" width="1" height="1" fill="#777"/><rect x="3.4" y="554.5" width="1" height="1" fill="#777"/><rect x="2.4" y="562.3" width="3.2" height="0.9" fill="#777"/><rect x="3.4" y="570.0" width="1" height="1" fill="#777"/></svg>
</div>
<div class="sec" id="dialog">
<div class="b" style="left:32.00px;top:169.00px;width:334.00px;height:287.00px;background:#f0f0f0;border:1px solid #737373;border-right-color:#858585;border-bottom:2px solid #9a9a9a"></div>
<div class="b" style="left:33.00px;top:170.00px;width:334.00px;height:24.60px;background:#fff"></div>
<span class="t" style="left:39.75px;top:177.00px;font-size:9.7px;line-height:11px;color:#000;letter-spacing:-0.016px;">Columnas</span>
<span class="t" style="left:308.50px;top:176.00px;font-size:11px;line-height:12px;color:#111;transform:scaleX(0.9143);">?</span>
<svg class="b" style="left:343.00px;top:177.00px" width="11" height="10" viewBox="0 0 11 10"><path d="M0.8 0.6L9.6 9.2M9.6 0.6L0.8 9.2" stroke="#111" stroke-width="1.2"/></svg>
<div class="b" style="left:38.50px;top:205.00px;width:321.00px;height:60.00px;border:1px solid #dcdcdc"></div>
<div class="b" style="left:41.50px;top:200.00px;width:67.50px;height:11.00px;background:#f0f0f0"></div>
<span class="t" style="left:42.50px;top:202.00px;font-size:8.7px;line-height:10px;color:#111;letter-spacing:0.211px;">Preestablecidas</span>
<div class="b" style="left:57.20px;top:216.80px;width:29.50px;height:30.60px;background:#fff;border:1px solid #adadad"></div>
<svg class="b" style="left:57.20px;top:216.80px" width="32" height="34" viewBox="0 0 32 34"><rect x="7.80" y="7.28" width="16.20" height="1.25" fill="#2b2b2b"/><rect x="7.80" y="9.42" width="16.20" height="1.25" fill="#2b2b2b"/><rect x="7.80" y="11.55" width="16.20" height="1.25" fill="#2b2b2b"/><rect x="7.80" y="13.70" width="16.20" height="1.25" fill="#2b2b2b"/><rect x="7.80" y="15.84" width="16.20" height="1.25" fill="#2b2b2b"/><rect x="7.80" y="17.98" width="16.20" height="1.25" fill="#2b2b2b"/><rect x="7.80" y="20.12" width="16.20" height="1.25" fill="#2b2b2b"/><rect x="7.80" y="22.26" width="16.20" height="1.25" fill="#2b2b2b"/><rect x="7.80" y="24.40" width="16.20" height="1.25" fill="#2b2b2b"/></svg>
<div class="b" style="left:121.20px;top:216.80px;width:29.50px;height:30.60px;background:#fff;border:1px solid #adadad"></div>
<div class="b" style="left:124.20px;top:220.00px;width:21.60px;height:23.00px;border:2px solid #0078d7"></div>
<svg class="b" style="left:121.20px;top:216.80px" width="32" height="34" viewBox="0 0 32 34"><rect x="7.60" y="7.28" width="7.20" height="1.25" fill="#2b2b2b"/><rect x="7.60" y="9.42" width="7.20" height="1.25" fill="#2b2b2b"/><rect x="7.60" y="11.55" width="7.20" height="1.25" fill="#2b2b2b"/><rect x="7.60" y="13.70" width="7.20" height="1.25" fill="#2b2b2b"/><rect x="7.60" y="15.84" width="7.20" height="1.25" fill="#2b2b2b"/><rect x="7.60" y="17.98" width="7.20" height="1.25" fill="#2b2b2b"/><rect x="7.60" y="20.12" width="7.20" height="1.25" fill="#2b2b2b"/><rect x="7.60" y="22.26" width="7.20" height="1.25" fill="#2b2b2b"/><rect x="7.60" y="24.40" width="7.20" height="1.25" fill="#2b2b2b"/><rect x="16.80" y="7.28" width="7.40" height="1.25" fill="#2b2b2b"/><rect x="16.80" y="9.42" width="7.40" height="1.25" fill="#2b2b2b"/><rect x="16.80" y="11.55" width="7.40" height="1.25" fill="#2b2b2b"/><rect x="16.80" y="13.70" width="7.40" height="1.25" fill="#2b2b2b"/><rect x="16.80" y="15.84" width="7.40" height="1.25" fill="#2b2b2b"/><rect x="16.80" y="17.98" width="7.40" height="1.25" fill="#2b2b2b"/><rect x="16.80" y="20.12" width="7.40" height="1.25" fill="#2b2b2b"/><rect x="16.80" y="22.26" width="7.40" height="1.25" fill="#2b2b2b"/><rect x="16.80" y="24.40" width="7.40" height="1.25" fill="#2b2b2b"/></svg>
<div class="b" style="left:184.70px;top:216.80px;width:29.50px;height:30.60px;background:#fff;border:1px solid #adadad"></div>
<svg class="b" style="left:184.70px;top:216.80px" width="32" height="34" viewBox="0 0 32 34"><rect x="7.00" y="7.28" width="5.00" height="1.25" fill="#2b2b2b"/><rect x="7.00" y="9.42" width="5.00" height="1.25" fill="#2b2b2b"/><rect x="7.00" y="11.55" width="5.00" height="1.25" fill="#2b2b2b"/><rect x="7.00" y="13.70" width="5.00" height="1.25" fill="#2b2b2b"/><rect x="7.00" y="15.84" width="5.00" height="1.25" fill="#2b2b2b"/><rect x="7.00" y="17.98" width="5.00" height="1.25" fill="#2b2b2b"/><rect x="7.00" y="20.12" width="5.00" height="1.25" fill="#2b2b2b"/><rect x="7.00" y="22.26" width="5.00" height="1.25" fill="#2b2b2b"/><rect x="7.00" y="24.40" width="5.00" height="1.25" fill="#2b2b2b"/><rect x="13.30" y="7.28" width="5.00" height="1.25" fill="#2b2b2b"/><rect x="13.30" y="9.42" width="5.00" height="1.25" fill="#2b2b2b"/><rect x="13.30" y="11.55" width="5.00" height="1.25" fill="#2b2b2b"/><rect x="13.30" y="13.70" width="5.00" height="1.25" fill="#2b2b2b"/><rect x="13.30" y="15.84" width="5.00" height="1.25" fill="#2b2b2b"/><rect x="13.30" y="17.98" width="5.00" height="1.25" fill="#2b2b2b"/><rect x="13.30" y="20.12" width="5.00" height="1.25" fill="#2b2b2b"/><rect x="13.30" y="22.26" width="5.00" height="1.25" fill="#2b2b2b"/><rect x="13.30" y="24.40" width="5.00" height="1.25" fill="#2b2b2b"/><rect x="19.60" y="7.28" width="4.80" height="1.25" fill="#2b2b2b"/><rect x="19.60" y="9.42" width="4.80" height="1.25" fill="#2b2b2b"/><rect x="19.60" y="11.55" width="4.80" height="1.25" fill="#2b2b2b"/><rect x="19.60" y="13.70" width="4.80" height="1.25" fill="#2b2b2b"/><rect x="19.60" y="15.84" width="4.80" height="1.25" fill="#2b2b2b"/><rect x="19.60" y="17.98" width="4.80" height="1.25" fill="#2b2b2b"/><rect x="19.60" y="20.12" width="4.80" height="1.25" fill="#2b2b2b"/><rect x="19.60" y="22.26" width="4.80" height="1.25" fill="#2b2b2b"/><rect x="19.60" y="24.40" width="4.80" height="1.25" fill="#2b2b2b"/></svg>
<div class="b" style="left:248.00px;top:216.80px;width:29.50px;height:30.60px;background:#fff;border:1px solid #adadad"></div>
<svg class="b" style="left:248.00px;top:216.80px" width="32" height="34" viewBox="0 0 32 34"><rect x="7.50" y="7.28" width="5.20" height="1.25" fill="#2b2b2b"/><rect x="7.50" y="9.42" width="5.20" height="1.25" fill="#2b2b2b"/><rect x="7.50" y="11.55" width="5.20" height="1.25" fill="#2b2b2b"/><rect x="7.50" y="13.70" width="5.20" height="1.25" fill="#2b2b2b"/><rect x="7.50" y="15.84" width="5.20" height="1.25" fill="#2b2b2b"/><rect x="7.50" y="17.98" width="5.20" height="1.25" fill="#2b2b2b"/><rect x="7.50" y="20.12" width="5.20" height="1.25" fill="#2b2b2b"/><rect x="7.50" y="22.26" width="5.20" height="1.25" fill="#2b2b2b"/><rect x="7.50" y="24.40" width="5.20" height="1.25" fill="#2b2b2b"/><rect x="14.50" y="7.28" width="9.30" height="1.25" fill="#2b2b2b"/><rect x="14.50" y="9.42" width="9.30" height="1.25" fill="#2b2b2b"/><rect x="14.50" y="11.55" width="9.30" height="1.25" fill="#2b2b2b"/><rect x="14.50" y="13.70" width="9.30" height="1.25" fill="#2b2b2b"/><rect x="14.50" y="15.84" width="9.30" height="1.25" fill="#2b2b2b"/><rect x="14.50" y="17.98" width="9.30" height="1.25" fill="#2b2b2b"/><rect x="14.50" y="20.12" width="9.30" height="1.25" fill="#2b2b2b"/><rect x="14.50" y="22.26" width="9.30" height="1.25" fill="#2b2b2b"/><rect x="14.50" y="24.40" width="9.30" height="1.25" fill="#2b2b2b"/></svg>
<div class="b" style="left:311.20px;top:216.80px;width:29.50px;height:30.60px;background:#fff;border:1px solid #adadad"></div>
<svg class="b" style="left:311.20px;top:216.80px" width="32" height="34" viewBox="0 0 32 34"><rect x="7.00" y="7.28" width="9.80" height="1.25" fill="#2b2b2b"/><rect x="7.00" y="9.42" width="9.80" height="1.25" fill="#2b2b2b"/><rect x="7.00" y="11.55" width="9.80" height="1.25" fill="#2b2b2b"/><rect x="7.00" y="13.70" width="9.80" height="1.25" fill="#2b2b2b"/><rect x="7.00" y="15.84" width="9.80" height="1.25" fill="#2b2b2b"/><rect x="7.00" y="17.98" width="9.80" height="1.25" fill="#2b2b2b"/><rect x="7.00" y="20.12" width="9.80" height="1.25" fill="#2b2b2b"/><rect x="7.00" y="22.26" width="9.80" height="1.25" fill="#2b2b2b"/><rect x="7.00" y="24.40" width="9.80" height="1.25" fill="#2b2b2b"/><rect x="18.30" y="7.28" width="5.50" height="1.25" fill="#2b2b2b"/><rect x="18.30" y="9.42" width="5.50" height="1.25" fill="#2b2b2b"/><rect x="18.30" y="11.55" width="5.50" height="1.25" fill="#2b2b2b"/><rect x="18.30" y="13.70" width="5.50" height="1.25" fill="#2b2b2b"/><rect x="18.30" y="15.84" width="5.50" height="1.25" fill="#2b2b2b"/><rect x="18.30" y="17.98" width="5.50" height="1.25" fill="#2b2b2b"/><rect x="18.30" y="20.12" width="5.50" height="1.25" fill="#2b2b2b"/><rect x="18.30" y="22.26" width="5.50" height="1.25" fill="#2b2b2b"/><rect x="18.30" y="24.40" width="5.50" height="1.25" fill="#2b2b2b"/></svg>
<span class="t" style="left:65.00px;top:253.00px;font-size:8.7px;line-height:10px;color:#111;letter-spacing:0.099px;"><u>U</u>na</span>
<span class="t" style="left:129.25px;top:253.00px;font-size:8.7px;line-height:10px;color:#111;letter-spacing:0.094px;"><u>D</u>os</span>
<span class="t" style="left:191.75px;top:253.00px;font-size:8.7px;line-height:10px;color:#111;letter-spacing:-0.078px;">Tre<u>s</u></span>
<span class="t" style="left:244.25px;top:253.00px;font-size:8.7px;line-height:10px;color:#111;letter-spacing:0.361px;"><u>I</u>zquierda</span>
<span class="t" style="left:309.50px;top:253.00px;font-size:8.7px;line-height:10px;color:#111;letter-spacing:0.196px;">Derec<u>h</u>a</span>
<span class="t" style="left:38.00px;top:275.00px;font-size:8.7px;line-height:10px;color:#111;letter-spacing:0.328px;">Núme<u>r</u>o de columnas:</span>
<div class="b" style="left:137.20px;top:271.20px;width:37.30px;height:15.30px;background:#fff;border:1px solid #adadad"></div>
<div class="b" style="left:139.60px;top:274.80px;width:5.40px;height:9.80px;background:#b5d5f0"></div>
<span class="t" style="left:140.20px;top:275.00px;font-size:8.7px;line-height:10px;color:#0a3a78;">2</span>
<div class="b" style="left:162.30px;top:272.20px;width:11.00px;height:6.70px;background:#f0f0f0;border:1px solid #c4c4c4"></div>
<div class="b" style="left:162.30px;top:279.10px;width:11.00px;height:6.50px;background:#f0f0f0;border:1px solid #c4c4c4"></div>
<svg class="b" style="left:164.90px;top:273.80px" width="8" height="11.4" viewBox="0 0 8 11.4"><path d="M1.2 4.0H6.4L3.8 1.4Z" fill="#222"/><path d="M1.2 7.4H6.4L3.8 10.0Z" fill="#222"/></svg>
<div class="b" style="left:253.80px;top:272.40px;width:8.60px;height:8.60px;background:#fff;border:1px solid #333"></div>
<span class="t" style="left:268.00px;top:274.00px;font-size:8.7px;line-height:10px;color:#111;letter-spacing:0.272px;"><u>L</u>ínea entre columnas</span>
<div class="b" style="left:38.50px;top:295.00px;width:205.00px;height:105.00px;border:1px solid #dcdcdc"></div>
<div class="b" style="left:41.50px;top:290.00px;width:70.50px;height:11.00px;background:#f0f0f0"></div>
<span class="t" style="left:42.50px;top:291.00px;font-size:8.7px;line-height:10px;color:#111;letter-spacing:0.283px;">Ancho y espacio</span>
<span class="t" style="left:45.00px;top:307.00px;font-size:8.7px;line-height:10px;color:#111;letter-spacing:0.432px;"><u>C</u>ol. nº:</span>
<span class="t" style="left:83.50px;top:307.00px;font-size:8.7px;line-height:10px;color:#111;letter-spacing:0.490px;">A<u>n</u>cho:</span>
<span class="t" style="left:155.00px;top:307.00px;font-size:8.7px;line-height:10px;color:#111;letter-spacing:0.200px;">Es<u>p</u>aciado:</span>
<div class="b" style="left:45.00px;top:319.20px;width:30.20px;height:14.60px;background:#e9e9e9;border:1px solid #9a9a9a"></div>
<span class="t" style="left:57.50px;top:323.00px;font-size:8.7px;line-height:10px;color:#111;transform:scaleX(0.8621);">1:</span>
<div class="b" style="left:84.20px;top:319.20px;width:61.00px;height:14.80px;background:#fff;border:1px solid #adadad"></div>
<span class="t" style="left:86.75px;top:323.00px;font-size:8.7px;line-height:10px;color:#111;letter-spacing:-0.058px;">6,87 cm</span>
<div class="b" style="left:133.60px;top:319.80px;width:11.00px;height:6.80px;background:#f0f0f0;border:1px solid #c4c4c4"></div>
<div class="b" style="left:133.60px;top:326.80px;width:11.00px;height:6.60px;background:#f0f0f0;border:1px solid #c4c4c4"></div>
<svg class="b" style="left:136.20px;top:321.40px" width="8" height="11.6" viewBox="0 0 8 11.6"><path d="M1.2 4.1H6.4L3.8 1.5Z" fill="#222"/><path d="M1.2 7.5H6.4L3.8 10.1Z" fill="#222"/></svg>
<div class="b" style="left:154.20px;top:319.20px;width:61.00px;height:14.80px;background:#fff;border:1px solid #adadad"></div>
<span class="t" style="left:156.75px;top:323.00px;font-size:8.7px;line-height:10px;color:#111;letter-spacing:0.049px;">1,25 cm</span>
<div class="b" style="left:203.80px;top:319.80px;width:11.00px;height:6.80px;background:#f0f0f0;border:1px solid #c4c4c4"></div>
<div class="b" style="left:203.80px;top:326.80px;width:11.00px;height:6.60px;background:#f0f0f0;border:1px solid #c4c4c4"></div>
<svg class="b" style="left:206.40px;top:321.40px" width="8" height="11.6" viewBox="0 0 8 11.6"><path d="M1.2 4.1H6.4L3.8 1.5Z" fill="#222"/><path d="M1.2 7.5H6.4L3.8 10.1Z" fill="#222"/></svg>
<div class="b" style="left:45.00px;top:338.00px;width:30.20px;height:14.60px;background:#ececec;border:1px solid #a8a8a8"></div>
<span class="t" style="left:57.50px;top:342.00px;font-size:8.7px;line-height:10px;color:#8e8e8e;transform:scaleX(0.8621);">2:</span>
<div class="b" style="left:84.20px;top:338.00px;width:61.00px;height:14.80px;background:#f3f3f3;border:1px solid #c6c6c6"></div>
<span class="t" style="left:86.75px;top:342.00px;font-size:8.7px;line-height:10px;color:#8e8e8e;letter-spacing:-0.058px;">6,87 cm</span>
<div class="b" style="left:133.60px;top:338.60px;width:11.00px;height:6.80px;background:#f0f0f0;border:1px solid #c4c4c4"></div>
<div class="b" style="left:133.60px;top:345.60px;width:11.00px;height:6.60px;background:#f0f0f0;border:1px solid #c4c4c4"></div>
<svg class="b" style="left:136.20px;top:340.20px" width="8" height="11.6" viewBox="0 0 8 11.6"><path d="M1.2 4.1H6.4L3.8 1.5Z" fill="#222"/><path d="M1.2 7.5H6.4L3.8 10.1Z" fill="#222"/></svg>
<div class="b" style="left:154.20px;top:338.00px;width:61.00px;height:14.80px;background:#f0f0f0;border:1px solid #c6c6c6"></div>
<div class="b" style="left:203.80px;top:338.60px;width:11.00px;height:6.80px;background:#f0f0f0;border:1px solid #c4c4c4"></div>
<div class="b" style="left:203.80px;top:345.60px;width:11.00px;height:6.60px;background:#f0f0f0;border:1px solid #c4c4c4"></div>
<svg class="b" style="left:206.40px;top:340.20px" width="8" height="11.6" viewBox="0 0 8 11.6"><path d="M1.2 4.1H6.4L3.8 1.5Z" fill="#222"/><path d="M1.2 7.5H6.4L3.8 10.1Z" fill="#8a8a8a"/></svg>
<div class="b" style="left:45.00px;top:356.80px;width:30.20px;height:14.60px;background:#ececec;border:1px solid #a8a8a8"></div>
<div class="b" style="left:84.20px;top:356.80px;width:61.00px;height:14.80px;background:#f0f0f0;border:1px solid #c6c6c6"></div>
<div class="b" style="left:133.60px;top:357.40px;width:11.00px;height:6.80px;background:#f0f0f0;border:1px solid #c4c4c4"></div>
<div class="b" style="left:133.60px;top:364.40px;width:11.00px;height:6.60px;background:#f0f0f0;border:1px solid #c4c4c4"></div>
<svg class="b" style="left:136.20px;top:359.00px" width="8" height="11.6" viewBox="0 0 8 11.6"><path d="M1.2 4.1H6.4L3.8 1.5Z" fill="#222"/><path d="M1.2 7.5H6.4L3.8 10.1Z" fill="#8a8a8a"/></svg>
<div class="b" style="left:154.20px;top:356.80px;width:61.00px;height:14.80px;background:#f0f0f0;border:1px solid #c6c6c6"></div>
<div class="b" style="left:203.80px;top:357.40px;width:11.00px;height:6.80px;background:#f0f0f0;border:1px solid #c4c4c4"></div>
<div class="b" style="left:203.80px;top:364.40px;width:11.00px;height:6.60px;background:#f0f0f0;border:1px solid #c4c4c4"></div>
<svg class="b" style="left:206.40px;top:359.00px" width="8" height="11.6" viewBox="0 0 8 11.6"><path d="M1.2 4.1H6.4L3.8 1.5Z" fill="#222"/><path d="M1.2 7.5H6.4L3.8 10.1Z" fill="#8a8a8a"/></svg>
<div class="b" style="left:45.00px;top:383.80px;width:9.00px;height:9.20px;background:#fff;border:1px solid #333"></div>
<svg class="b" style="left:45.00px;top:383.80px" width="12" height="12" viewBox="0 0 12 12"><path d="M2.4 5.6L4.6 8L9 2.8" fill="none" stroke="#222" stroke-width="1.1"/></svg>
<span class="t" style="left:60.00px;top:385.00px;font-size:8.7px;line-height:10px;color:#111;letter-spacing:0.356px;">C<u>o</u>lumnas de igual ancho</span>
<span class="t" style="left:38.00px;top:410.00px;font-size:8.7px;line-height:10px;color:#111;letter-spacing:0.203px;"><u>A</u>plicar a:</span>
<div class="b" style="left:84.20px;top:406.20px;width:126.50px;height:16.00px;background:#fff;border:1px solid #adadad"></div>
<div class="b" style="left:197.50px;top:407.20px;width:13.40px;height:15.20px;background:#e4e4e4;border-left:1px solid #c8c8c8"></div>
<svg class="b" style="left:200.50px;top:411.50px" width="9" height="7" viewBox="0 0 9 7"><path d="M1 1.4L4.4 4.8L7.8 1.4" fill="none" stroke="#444" stroke-width="1"/></svg>
<span class="t" style="left:86.75px;top:410.00px;font-size:8.7px;line-height:10px;color:#111;letter-spacing:0.339px;">Texto seleccionado</span>
<div class="b" style="left:254.00px;top:295.00px;width:105.50px;height:105.00px;border:1px solid #dcdcdc"></div>
<div class="b" style="left:257.50px;top:290.00px;width:50.50px;height:11.00px;background:#f0f0f0"></div>
<span class="t" style="left:258.75px;top:291.00px;font-size:8.7px;line-height:10px;color:#111;letter-spacing:0.230px;">Vista previa</span>
<div class="b" style="left:272.00px;top:306.20px;width:70.80px;height:90.80px;background:#c9c9c9"></div>
<div class="b" style="left:276.80px;top:308.00px;width:60.40px;height:85.00px;background:#fff;border:1px solid #111"></div>
<svg class="b" style="left:276.80px;top:308.00px" width="63" height="88" viewBox="0 0 63 88"><rect x="9.50" y="7.15" width="43.30" height="1.1" fill="#c2c2c2"/><rect x="9.50" y="9.57" width="38.30" height="1.1" fill="#c2c2c2"/><rect x="9.50" y="11.99" width="43.30" height="1.1" fill="#c2c2c2"/><rect x="9.50" y="14.41" width="38.30" height="1.1" fill="#c2c2c2"/><rect x="9.50" y="16.83" width="43.30" height="1.1" fill="#c2c2c2"/><rect x="9.50" y="19.25" width="38.30" height="1.1" fill="#c2c2c2"/><rect x="9.50" y="21.67" width="43.30" height="1.1" fill="#c2c2c2"/><rect x="9.50" y="24.09" width="38.30" height="1.1" fill="#c2c2c2"/><rect x="9.30" y="28.85" width="20.30" height="1.7" fill="#505050"/><rect x="9.30" y="31.29" width="20.30" height="1.7" fill="#505050"/><rect x="9.30" y="33.73" width="20.30" height="1.7" fill="#505050"/><rect x="9.30" y="36.17" width="20.30" height="1.7" fill="#505050"/><rect x="9.30" y="38.61" width="20.30" height="1.7" fill="#505050"/><rect x="9.30" y="41.05" width="20.30" height="1.7" fill="#505050"/><rect x="9.30" y="43.49" width="20.30" height="1.7" fill="#505050"/><rect x="9.30" y="45.93" width="20.30" height="1.7" fill="#505050"/><rect x="9.30" y="48.37" width="20.30" height="1.7" fill="#505050"/><rect x="9.30" y="50.81" width="20.30" height="1.7" fill="#505050"/><rect x="9.30" y="53.25" width="20.30" height="1.7" fill="#505050"/><rect x="9.30" y="55.69" width="20.30" height="1.7" fill="#505050"/><rect x="9.30" y="58.13" width="20.30" height="1.7" fill="#505050"/><rect x="9.30" y="60.57" width="20.30" height="1.7" fill="#505050"/><rect x="33.20" y="28.85" width="18.80" height="1.7" fill="#505050"/><rect x="33.20" y="31.29" width="18.80" height="1.7" fill="#505050"/><rect x="33.20" y="33.73" width="18.80" height="1.7" fill="#505050"/><rect x="33.20" y="36.17" width="18.80" height="1.7" fill="#505050"/><rect x="33.20" y="38.61" width="18.80" height="1.7" fill="#505050"/><rect x="33.20" y="41.05" width="18.80" height="1.7" fill="#505050"/><rect x="33.20" y="43.49" width="18.80" height="1.7" fill="#505050"/><rect x="33.20" y="45.93" width="18.80" height="1.7" fill="#505050"/><rect x="33.20" y="48.37" width="18.80" height="1.7" fill="#505050"/><rect x="33.20" y="50.81" width="18.80" height="1.7" fill="#505050"/><rect x="33.20" y="53.25" width="18.80" height="1.7" fill="#505050"/><rect x="33.20" y="55.69" width="18.80" height="1.7" fill="#505050"/><rect x="33.20" y="58.13" width="18.80" height="1.7" fill="#505050"/><rect x="33.20" y="60.57" width="18.80" height="1.7" fill="#505050"/><rect x="9.50" y="65.25" width="43.30" height="1.1" fill="#c2c2c2"/><rect x="9.50" y="67.67" width="38.30" height="1.1" fill="#c2c2c2"/><rect x="9.50" y="70.09" width="43.30" height="1.1" fill="#c2c2c2"/><rect x="9.50" y="72.51" width="38.30" height="1.1" fill="#c2c2c2"/><rect x="9.50" y="74.93" width="43.30" height="1.1" fill="#c2c2c2"/><rect x="9.50" y="77.35" width="38.30" height="1.1" fill="#c2c2c2"/><rect x="9.50" y="79.77" width="43.30" height="1.1" fill="#c2c2c2"/></svg>
<div class="b" style="left:254.20px;top:409.50px;width:10.20px;height:9.40px;background:#fff;border:1px solid #cfcfcf"></div>
<span class="t" style="left:268.00px;top:410.00px;font-size:8.7px;line-height:10px;color:#a2a2a2;letter-spacing:0.333px;">Iniciar columna nueva</span>
<div class="b" style="left:231.80px;top:433.20px;width:56.40px;height:13.60px;background:#e1e1e1;border:2px solid #0a7ad8"></div>
<span class="t" style="left:245.50px;top:437.00px;font-size:8.7px;line-height:10px;color:#111;letter-spacing:0.292px;">Aceptar</span>
<div class="b" style="left:300.80px;top:433.20px;width:59.40px;height:15.60px;background:#e1e1e1;border:1px solid #adadad"></div>
<span class="t" style="left:313.25px;top:437.00px;font-size:8.7px;line-height:10px;color:#111;letter-spacing:0.152px;">Cancelar</span>
</div>
<div class="sec" id="ink">
<svg class="b" style="left:0;top:0" width="768" height="727" viewBox="0 0 768 727"><g fill="none" stroke="#1212f0" stroke-width="1.9" stroke-linecap="round" stroke-linejoin="round"><path d="M146.2 27.8C149.0 27.9 157.7 28.1 162.5 28.4C167.3 28.7 171.5 29.1 175.0 29.6C178.5 30.1 181.9 30.4 183.8 31.5C185.6 32.6 185.5 32.5 186.2 36.5C187.0 40.5 187.5 49.0 188.0 55.2C188.5 61.5 189.2 69.8 189.4 74.0C189.6 78.2 190.8 79.0 189.4 80.2C188.0 81.5 185.3 81.5 181.2 81.8C177.2 82.0 169.8 82.2 165.0 81.8C160.2 81.3 155.6 80.3 152.5 79.0C149.4 77.7 148.1 75.9 146.2 74.0C144.4 72.1 142.2 70.9 141.2 67.8C140.3 64.6 140.6 59.9 140.6 55.2C140.6 50.6 141.0 45.0 141.5 40.0C142.0 35.0 143.2 27.7 143.5 25.2"/><path d="M135.0 81.0C133.5 80.8 130.4 80.4 126.2 80.0C122.1 79.6 114.8 78.3 110.0 78.8C105.2 79.2 100.8 80.8 97.5 82.5C94.2 84.2 91.6 86.2 90.0 88.8C88.4 91.2 87.8 94.8 88.0 97.5C88.2 100.2 89.2 103.0 91.2 105.0C93.2 107.0 96.0 108.5 100.0 109.5C104.0 110.5 109.2 110.7 115.0 111.2C120.8 111.8 127.5 112.5 135.0 113.0C142.5 113.5 152.5 114.5 160.0 114.5C167.5 114.5 174.6 114.0 180.0 113.0C185.4 112.0 189.6 110.7 192.5 108.8C195.4 106.8 197.1 103.8 197.5 101.2C197.9 98.8 196.7 96.2 195.0 93.8C193.3 91.2 190.8 88.1 187.5 86.2C184.2 84.4 179.6 83.3 175.0 82.5C170.4 81.7 165.4 81.5 160.0 81.2C154.6 81.0 148.1 81.0 142.5 80.8C136.9 80.5 129.0 80.1 126.2 80.0"/><path d="M146.2 74.5C145.6 75.6 144.4 78.2 142.5 81.2C140.6 84.2 137.5 89.4 135.0 92.5C132.5 95.6 130.0 97.5 127.5 100.0C125.0 102.5 122.9 104.8 120.0 107.5C117.1 110.2 113.3 113.4 110.0 116.2C106.7 119.1 102.7 122.2 100.0 124.5C97.3 126.8 96.1 127.8 93.8 130.0C91.4 132.2 88.0 135.0 86.0 137.5C84.0 140.0 83.6 142.1 82.0 145.0C80.4 147.9 78.2 151.5 76.2 155.0C74.2 158.5 72.2 162.8 70.0 166.2C67.8 169.7 64.2 174.0 63.1 175.6"/><path d="M60.6 166.9C60.8 167.6 61.1 169.6 61.5 171.0C61.9 172.4 62.8 174.8 63.1 175.6"/><path d="M63.1 175.6C64.5 175.2 68.1 174.2 71.2 173.3C74.4 172.4 80.1 170.8 81.9 170.2"/><path d="M62.5 390.0C62.3 389.2 61.7 386.7 61.2 385.0C60.8 383.3 61.2 381.3 60.0 380.0C58.8 378.7 56.2 377.4 53.8 377.0C51.2 376.6 47.7 376.8 45.0 377.5C42.3 378.2 39.4 379.5 37.5 381.2C35.6 383.0 34.0 385.9 33.6 388.0C33.2 390.1 33.9 392.4 35.0 394.0C36.1 395.6 37.5 396.8 40.0 397.5C42.5 398.2 47.0 398.4 50.0 398.2C53.0 397.9 56.7 396.4 58.0 396.0"/><path d="M34.5 394.5C35.8 395.3 38.2 398.0 42.5 399.3C46.8 400.6 52.9 401.6 60.0 402.3C67.1 403.0 76.7 403.4 85.0 403.8C93.3 404.1 101.7 404.4 110.0 404.3C118.3 404.2 127.5 403.7 135.0 403.0C142.5 402.3 149.2 401.1 155.0 400.0C160.8 398.9 165.9 397.7 170.0 396.2C174.1 394.8 177.9 392.0 179.5 391.2"/><path d="M48.8 408.8C46.5 408.2 39.0 406.2 35.0 405.8C31.0 405.3 27.3 405.1 25.0 406.2C22.7 407.4 21.7 410.2 21.2 412.5C20.8 414.8 21.0 417.7 22.5 420.0C24.0 422.3 26.7 424.4 30.0 426.2C33.3 428.1 37.5 429.9 42.5 431.2C47.5 432.6 52.9 433.7 60.0 434.5C67.1 435.3 75.8 436.0 85.0 436.2C94.2 436.5 105.0 436.5 115.0 436.2C125.0 436.0 135.4 435.6 145.0 435.0C154.6 434.4 164.2 433.4 172.5 432.5C180.8 431.6 189.5 430.8 195.0 429.5C200.5 428.2 203.2 426.8 205.5 425.0C207.8 423.2 208.4 421.2 208.5 419.0C208.6 416.8 207.5 413.3 206.0 411.5C204.5 409.7 203.0 408.8 199.5 408.0C196.0 407.2 191.6 407.4 185.0 407.0C178.4 406.6 168.3 405.9 160.0 405.5C151.7 405.1 143.3 404.6 135.0 404.5C126.7 404.4 118.3 404.7 110.0 405.0C101.7 405.3 93.3 405.6 85.0 406.2C76.7 406.9 66.3 408.0 60.0 408.8C53.7 409.5 49.2 410.2 47.0 410.5"/></g></svg>
</div>
</div></body></html>
